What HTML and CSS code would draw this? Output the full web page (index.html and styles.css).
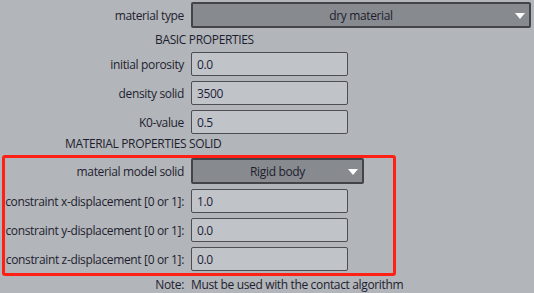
FILE: index.html
```html
<!DOCTYPE html>
<html lang="en">

<head>
 <meta charset="UTF-8">
 <meta name="viewport" content="width=device-width, initial-scale=1.0">
 <link rel="stylesheet" href="styles.css">
 <title>Material properties</title>
</head>

<body>
 <div class="panel">
  <div class="row">
   <label class="caption">material type</label>
   <div class="dropdown dropdown-wide">
    <span>dry material</span>
    <span class="arrow"></span>
   </div>
  </div>

  <div class="section basic">BASIC PROPERTIES</div>

  <div class="row">
   <label class="caption">initial porosity</label>
   <input type="text" class="field" value="0.0">
  </div>
  <div class="row">
   <label class="caption">density solid</label>
   <input type="text" class="field" value="3500">
  </div>
  <div class="row">
   <label class="caption">K0-value</label>
   <input type="text" class="field" value="0.5">
  </div>

  <div class="section solid">MATERIAL PROPERTIES SOLID</div>

  <div class="highlight">
   <div class="row">
    <label class="caption">material model solid</label>
    <div class="dropdown dropdown-small">
     <span>Rigid body</span>
     <span class="arrow"></span>
    </div>
   </div>
   <div class="row">
    <label class="caption">constraint x-displacement [0 or 1]:</label>
    <input type="text" class="field" value="1.0">
   </div>
   <div class="row">
    <label class="caption">constraint y-displacement [0 or 1]:</label>
    <input type="text" class="field" value="0.0">
   </div>
   <div class="row">
    <label class="caption">constraint z-displacement [0 or 1]:</label>
    <input type="text" class="field" value="0.0">
   </div>
  </div>

  <div class="row note">
   <span class="caption">Note:</span>
   <span>Must be used with the contact algorithm</span>
  </div>
 </div>
</body>

</html>
```

FILE: styles.css
```css
/* Reset */
body {
 margin: 0;
 padding: 0;
 background-color: #b2b5b9;
 color: #1e1e30;
 font-family: "Open Sans", Arial, sans-serif;
 font-size: 12px;
 letter-spacing: -0.35px;
}

.panel {
 padding-top: 2px;
 display: flex;
 flex-direction: column;
}

.row {
 display: grid;
 grid-template-columns: 184px auto;
 column-gap: 7px;
 align-items: center;
 justify-content: start;
}

.row + .row {
 margin-top: 5px;
}

.caption {
 text-align: right;
 white-space: nowrap;
}

.section {
 height: 24px;
 line-height: 24px;
 white-space: nowrap;
}

.basic {
 padding-left: 155px;
}

.solid {
 height: 21px;
 line-height: 19px;
 padding-left: 65px;
}

/* Dropdowns */
.dropdown {
 box-sizing: border-box;
 height: 26px;
 display: flex;
 align-items: center;
 justify-content: center;
 position: relative;
 background-color: #878a8e;
 border: 2px solid #424447;
 border-radius: 2px;
}

.dropdown-wide {
 width: 340px;
}

.dropdown-small {
 width: 173px;
}

.arrow {
 position: absolute;
 right: 4px;
 top: 9px;
 width: 0;
 height: 0;
 border-left: 5px solid transparent;
 border-right: 5px solid transparent;
 border-top: 6px solid #fff;
}

/* Text fields */
.field {
 box-sizing: border-box;
 width: 157px;
 height: 24px;
 margin: 0;
 padding: 0 5px;
 background-color: #c0c3c7;
 border: 1px solid #4c4e52;
 border-radius: 2px;
 color: #1e1e3a;
 font-family: inherit;
 font-size: 12px;
 letter-spacing: inherit;
}

/* Red outline around the solid properties */
.highlight {
 margin-left: 2px;
 width: 394px;
 box-sizing: border-box;
 padding-bottom: 2px;
 border: 3px solid #ff2015;
 border-radius: 3px;
}

.highlight .row {
 grid-template-columns: 179px auto;
}

.note {
 height: 17px;
 margin-top: 0;
}
```
